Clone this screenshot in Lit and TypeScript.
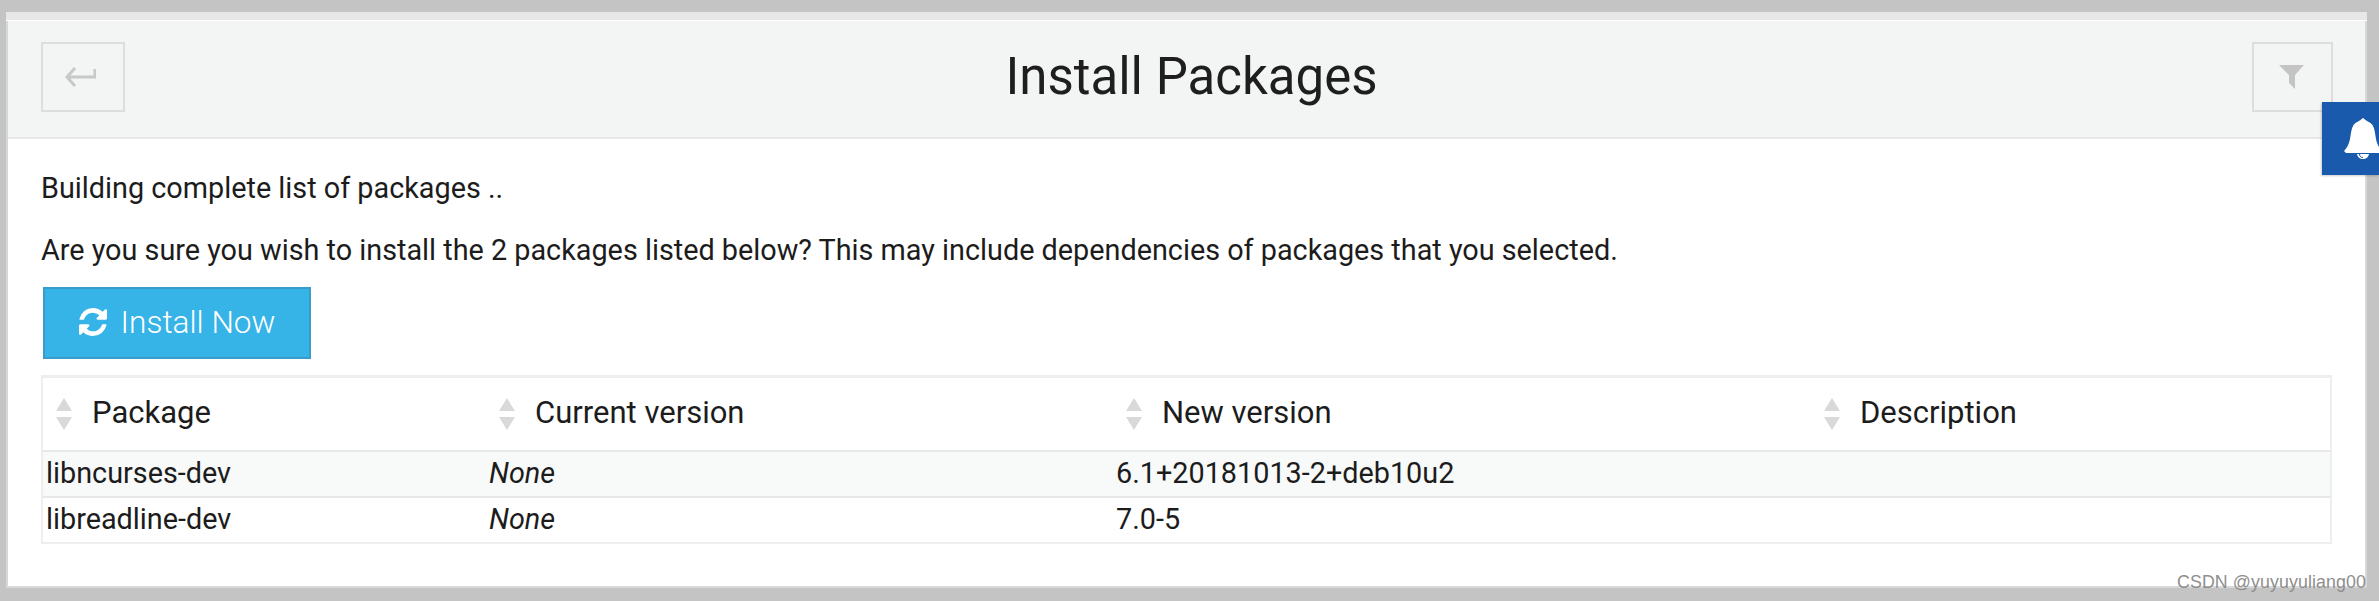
import { LitElement, html, css, svg } from "lit";
import { customElement } from "lit/decorators.js";

const sortIcon = svg`<svg class="sort" viewBox="0 0 16 32" width="16" height="32"><path d="M8 0 L16 13 L0 13 Z" fill="#d9d9d9"/><path d="M0 19 L16 19 L8 32 Z" fill="#d9d9d9"/></svg>`;

@customElement("app-root")
export class AppRoot extends LitElement {
  static styles = css`
    :host { display: block; width: 2379px; height: 601px; background: #c3c4c3; overflow: hidden; position: relative; font-family: Roboto, sans-serif; color: #1c1c1c; }
    .frame { padding: 12px 12px 13px 6px; box-sizing: border-box; height: 601px; display: flex; }
    .panel { flex: 1; display: flex; flex-direction: column; background: #fff; border-bottom: 2px solid #d8d8d8; border-left: 2px solid #d8d8d8; border-right: 2px solid #d8d8d8; }
    .band { height: 8px; margin: 0 -2px; background: #e7e7e7; border-bottom: 1px solid #fff; flex: none; }
    .head { height: 118px; flex: none; box-sizing: border-box; background: #f3f5f4; border-bottom: 2px solid #e6e7e6; display: flex; align-items: flex-start; justify-content: space-between; padding: 21px 32px 0 33px; position: relative; }
    .btn { height: 70px; box-sizing: border-box; border: 2px solid #dcdddc; display: flex; align-items: center; justify-content: center; }
    .btn.back { width: 84px; padding-right: 6px; }
    .btn.filter { width: 81px; }
    .title { font-size: 51px; font-weight: 400; line-height: 70px; color: #1e1e1e; margin: 0 0 0 6px; }
    .body { padding: 31px 33px 0 33px; font-size: 28.8px; }
    .line { margin: 0; line-height: 36px; }
    .line + .line { margin-top: 26px; }
    .install { margin: 19px 0 0 2px; width: 268px; height: 72px; box-sizing: border-box; background: #36b3e7; border: 2px solid #3a9ccb; color: #fff; font-family: inherit; font-size: 31.6px; font-weight: 300; display: flex; align-items: center; justify-content: center; gap: 14px; padding: 0 0 2px 0; }
    .table { margin-top: 16px; border: 2px solid #eeeeee; border-top-width: 3px; display: grid; grid-template-columns: 443px 627px 698px 1fr; }
    .th { height: 74px; box-sizing: border-box; display: flex; align-items: center; gap: 20px; padding-left: 13px; font-size: 31px; border-bottom: 2px solid #e6e7e6; }
    .th span { margin-top: -4px; }
    .td { height: 46px; box-sizing: border-box; display: flex; align-items: center; padding: 0 0 2px 3px; font-size: 28.8px; border-bottom: 2px solid #e6e7e6; }
    .odd { background: #f8f9f9; }
    .last { border-bottom: none; height: 44px; }
    .em { font-style: italic; }
    .bell { position: absolute; left: 2322px; top: 102px; width: 57px; height: 73px; background: #1a5aad; box-shadow: -1px 1px 2px rgba(0,0,0,.2); display: flex; align-items: center; padding-left: 22px; box-sizing: border-box; overflow: hidden; }
    .bell svg { flex: none; }
    .mark { position: absolute; right: 13px; top: 572px; font-family: "Liberation Sans", sans-serif; font-size: 17.8px; color: #8e8e8e; line-height: 20px; letter-spacing: 0.1px; }
  `;

  render() {
    return html`
      <div class="frame">
        <div class="panel">
          <div class="band"></div>
          <div class="head">
            <div class="btn back">
              <svg width="32" height="22" viewBox="0 0 32 22"><path d="M31 3 V11 H4 M11 2 L3 11 L11 20" fill="none" stroke="#c8c8c8" stroke-width="3"/></svg>
            </div>
            <h1 class="title">Install Packages</h1>
            <div class="btn filter">
              <svg width="26" height="26" viewBox="0 0 26 26"><path d="M0 1 H25 L16 11 V25 L10 19 V11 Z" fill="#c4c4c4"/></svg>
            </div>
          </div>
          <div class="body">
            <p class="line">Building complete list of packages ..</p>
            <p class="line">Are you sure you wish to install the 2 packages listed below? This may include dependencies of packages that you selected.</p>
            <button class="install">
              <svg width="28" height="28" viewBox="0 0 1536 1536"><path fill="#fff" d="M1511 928q0 5-1 7-64 268-268 434.500t-478 166.500q-146 0-282.500-55t-243.500-157l-129 129q-19 19-45 19t-45-19-19-45v-448q0-26 19-45t45-19h448q26 0 45 19t19 45-19 45l-137 137q71 66 161 102t187 36q134 0 250-65t186-179q11-17 53-117 8-23 30-23h192q13 0 22.500 9.500t9.500 22.500zm25-800v448q0 26-19 45t-45 19h-448q-26 0-45-19t-19-45 19-45l138-138q-148-137-349-137-134 0-250 65t-186 179q-11 17-53 117-8 23-30 23h-199q-13 0-22.500-9.500t-9.500-22.500v-7q65-268 270-434.500t480-166.500q146 0 284 55.500t245 156.500l130-129q19-19 45-19t45 19 19 45z"/></svg>
              Install Now
            </button>
            <div class="table">
              ${["Package", "Current version", "New version", "Description"].map(
                (h) => html`<div class="th">${sortIcon}<span>${h}</span></div>`
              )}
              <div class="td odd">libncurses-dev</div>
              <div class="td odd em">None</div>
              <div class="td odd">6.1+20181013-2+deb10u2</div>
              <div class="td odd"></div>
              <div class="td last">libreadline-dev</div>
              <div class="td last em">None</div>
              <div class="td last">7.0-5</div>
              <div class="td last"></div>
            </div>
          </div>
        </div>
      </div>
      <div class="bell">
        <svg width="38" height="41" viewBox="0 0 38 41"><path fill="#fff" d="M19 0 L21 1.500 C22 3 26 4 28.500 7 C31 11 31 16 32 21 C33 26 35 30 38 33 L36 35 H2 L0 33 C3 30 5 26 6 21 C7 16 7 11 9.500 7 C12 4 16 3 17 1.500 Z"/><path fill="#fff" d="M13 36 H25 C24.500 39 22 41 19 41 C16 41 13.500 39 13 36 Z"/><path d="M15.500 35 C15 38 17 39.500 19 39.500" fill="none" stroke="#1a5aad" stroke-width="1"/></svg>
      </div>
      <div class="mark">CSDN @yuyuyuliang00</div>
    `;
  }
}
